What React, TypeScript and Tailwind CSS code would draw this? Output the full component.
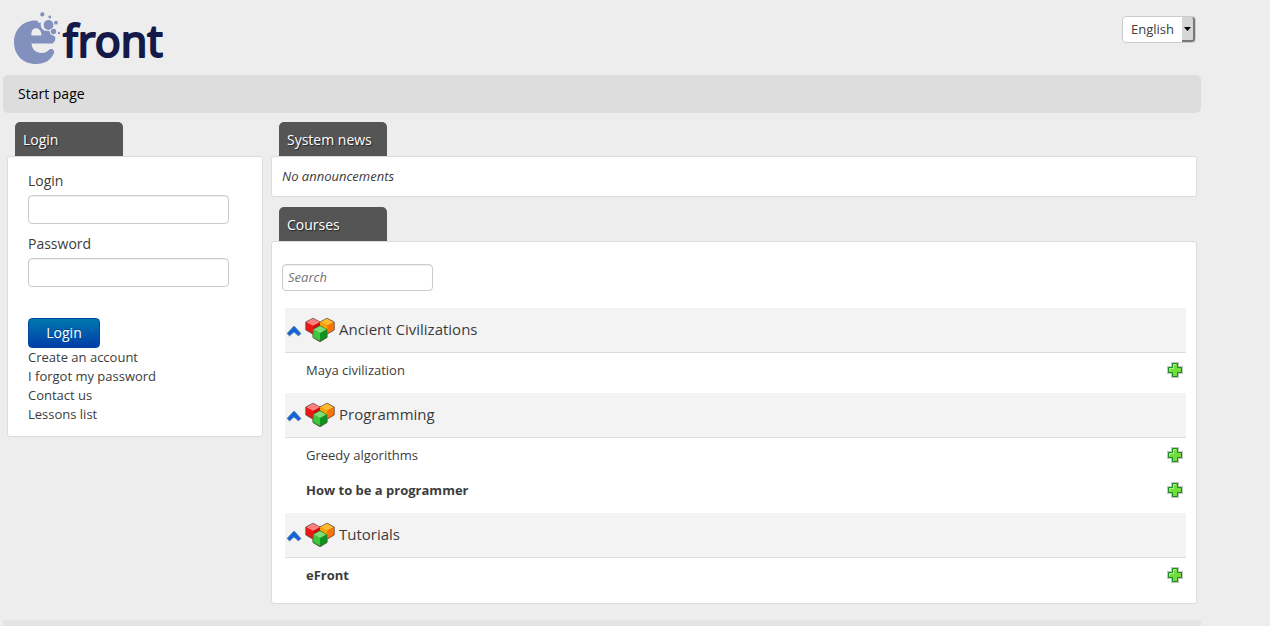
import { useState, type ReactNode } from "react";

type Course = { name: string; bold?: boolean };
type Category = { title: string; courses: Course[] };

const categories: Category[] = [
  { title: "Ancient Civilizations", courses: [{ name: "Maya civilization" }] },
  {
    title: "Programming",
    courses: [{ name: "Greedy algorithms" }, { name: "How to be a programmer", bold: true }],
  },
  { title: "Tutorials", courses: [{ name: "eFront", bold: true }] },
];

const links = ["Create an account", "I forgot my password", "Contact us", "Lessons list"];

function Logo() {
  return (
    <svg width="160" height="65" viewBox="0 0 160 65" role="img" aria-label="efront">
      <path
        fill="#8290bd"
        fillRule="evenodd"
        d="M23 10.500C10 9.500 0 19 0 32C0 45 9 54 22 54C31 54 37 50 40 43C41 40 38 38 35.500 39.500C33 42 31 43 27.500 43C22 43 18 39.500 17.500 33.500H38.500C41 32 42 28.500 41 26.500L37 24.500L35.500 21L30 20.500C27 18.500 26 15 27 12.500L25 13ZM17.500 25.500C16 16 27.500 15.500 27.500 25.500Z"
      />
      <circle cx="34.500" cy="15" r="4.900" fill="#8290bd" />
      <circle cx="39.500" cy="21.500" r="3.600" fill="#ededed" />
      <circle cx="39.500" cy="21.500" r="2.700" fill="#8290bd" />
      <circle cx="28.300" cy="4.400" r="2.100" fill="#8290bd" />
      <circle cx="35.800" cy="7" r="1.400" fill="#8290bd" />
      <circle cx="42" cy="12.700" r="1.900" fill="#8290bd" />
      <circle cx="45" cy="23" r="1.200" fill="#8290bd" />
      <text
        x="49"
        y="47"
        fill="#131a4a"
        stroke="#131a4a"
        strokeWidth="2"
        strokeLinejoin="round"
        className="font-['Noto_Sans',sans-serif] text-[43px]"
      >
        front
      </text>
    </svg>
  );
}

function Chevron() {
  return (
    <svg width="16" height="16" viewBox="0 0 16 16" aria-hidden="true">
      <path d="M1.200 11.500L8 4.200L14.800 11.500L12.500 13.800L8 9.800L3.500 13.800Z" fill="#1668d0" stroke="#3d6ba8" strokeLinejoin="round" />
      <path d="M3.500 11.500L8 7L12.500 11.500" fill="none" stroke="#0f63dd" strokeWidth="2" />
    </svg>
  );
}

function Cubes() {
  return (
    <svg width="30" height="26" viewBox="0 0 30 26" aria-hidden="true">
      <path
        d="M8 1.200L15 5L22 1.200L29.200 5V13L22 17.200V20.500L15 24.800L8 20.500V17.200L0.800 13V5Z"
        fill="#8a3418"
        stroke="#75625b"
        strokeLinejoin="round"
      />
      <path d="M8 1.500L15 5.200L8 9L1.200 5.200Z" fill="#ff7d7d" />
      <path d="M1.200 5.200L8 9V16.600L1.200 12.800Z" fill="#f01616" />
      <path d="M8 9L15 5.200V12.600L8 16.600Z" fill="#d40c0e" />
      <path d="M22 1.500L28.800 5.200L22 9L15 5.200Z" fill="#ffb92e" />
      <path d="M15 5.200L22 9V16.600L15 12.600Z" fill="#ffa400" />
      <path d="M22 9L28.800 5.200V12.800L22 16.600Z" fill="#ff7400" />
      <path d="M15 8.300L22.200 12.200V20.500L15 24.500L7.800 20.500V12.200Z" fill="#35702a" />
      <path d="M15 9L21.600 12.500L15 16.200L8.400 12.500Z" fill="#7ddc74" />
      <path d="M8.400 12.500L15 16.200V23.800L8.400 20.200Z" fill="#3cc83c" />
      <path d="M15 16.200L21.600 12.500V20.200L15 23.800Z" fill="#0b9420" />
    </svg>
  );
}

function Plus() {
  return (
    <svg width="16" height="16" viewBox="0 0 16 16" aria-hidden="true">
      <path d="M4 0H12V4H16V12H12V16H4V12H0V4H4Z" fill="#c4c4c4" />
      <path d="M5.500 1.500H10.500V5.500H14.500V10.500H10.500V14.500H5.500V10.500H1.500V5.500H5.500Z" fill="#72dc3c" stroke="#178a20" />
      <path d="M2.500 9V6.500H6.500V2.500H9" fill="none" stroke="#b1f58b" />
    </svg>
  );
}

function Panel({ title, children }: { title: string; children: ReactNode }) {
  return (
    <section>
      <h2 className="ml-2 flex h-[34px] w-[108px] items-center rounded-t-[5px] bg-[#555] px-2 pt-0.5 text-sm text-white [text-shadow:1px_1px_1px_#222]">
        {title}
      </h2>
      <div className="rounded-[3px] border border-[#dcdcdc] bg-white">{children}</div>
    </section>
  );
}

function CategoryBlock({ title, courses }: Category) {
  const [open, setOpen] = useState(true);
  return (
    <div className="pb-[5px]">
      <h3>
        <button
          type="button"
          aria-expanded={open}
          onClick={() => setOpen(!open)}
          className="flex h-[45px] w-full items-center border-b border-[#dcdcdc] bg-[#f3f3f3] pl-px text-[15px]"
        >
          <Chevron />
          <span className="ml-[3px] mr-1">
            <Cubes />
          </span>
          <span className="pb-0.5">{title}</span>
        </button>
      </h3>
      {open && (
        <ul>
          {courses.map((course) => (
            <li key={course.name} className="flex h-[35px] items-center justify-between pl-[21px] pr-[3px] text-[13px]">
              <a href="#" className={course.bold ? "font-bold" : ""}>
                {course.name}
              </a>
              <button type="button" aria-label={`Add ${course.name}`} className="pb-px">
                <Plus />
              </button>
            </li>
          ))}
        </ul>
      )}
    </div>
  );
}

export default function App() {
  const field =
    "block rounded-[4px] border border-[#ccc] bg-white px-[5px] shadow-[inset_0_1px_1px_rgba(0,0,0,0.075)] outline-none";
  return (
    <div className="min-h-screen bg-[#ededed] pl-[3px] pr-[69px] font-['Open_Sans','Noto_Sans',sans-serif] text-[#3c3c3c]">
      <header className="flex h-[75px] items-start justify-between pl-[11px] pr-[5px]">
        <a href="#" className="pt-[10px]">
          <Logo />
        </a>
        <div className="relative mt-4">
          <select
            aria-label="Language"
            className="block h-[27px] w-[74px] appearance-none rounded-[4px] border border-[#ccc] bg-white pl-2 text-[13px] outline-none"
          >
            <option>English</option>
          </select>
          <span className="pointer-events-none absolute inset-y-px right-px flex w-[13px] items-center justify-center rounded-r-[3px] border-b-2 border-r-2 border-[#777] bg-[#d6d6d6]">
            <svg width="7" height="4" viewBox="0 0 7 4" aria-hidden="true">
              <path d="M0 0H7L3.500 4Z" />
            </svg>
          </span>
        </div>
      </header>

      <nav className="flex h-[38px] items-center rounded-[5px] bg-[#ddd] px-[15px] text-sm text-black">
        <a href="#">Start page</a>
      </nav>

      <main className="flex items-start gap-2 px-1 pb-4 pt-[9px]">
        <aside className="w-[256px] shrink-0">
          <Panel title="Login">
            <form className="px-5 pb-3 pt-[14px]" onSubmit={(e) => e.preventDefault()}>
              <label htmlFor="login" className="block text-sm">
                Login
              </label>
              <input id="login" type="text" className={`${field} mt-1 h-[29px] w-[201px] text-sm`} />
              <label htmlFor="password" className="mt-[10px] block text-sm">
                Password
              </label>
              <input id="password" type="password" className={`${field} mt-1 h-[29px] w-[201px] text-sm`} />
              <button
                type="submit"
                className="mt-[31px] block h-[30px] w-[72px] rounded-[4px] border border-[#03499b] bg-linear-to-b from-[#0077ad] to-[#003ca8] text-sm text-white [text-shadow:0_-1px_0_rgba(0,0,0,0.25)]"
              >
                Login
              </button>
              <ul className="text-[13px] leading-[19px]">
                {links.map((link) => (
                  <li key={link}>
                    <a href="#">{link}</a>
                  </li>
                ))}
              </ul>
            </form>
          </Panel>
        </aside>

        <div className="flex min-w-0 flex-1 flex-col gap-[10px]">
          <Panel title="System news">
            <p className="px-[10px] py-[9px] text-[13px] italic leading-[21px]">No announcements</p>
          </Panel>
          <Panel title="Courses">
            <div className="px-[10px] pb-[5px] pt-[22px]">
              <input
                type="search"
                aria-label="Search"
                placeholder="Search"
                className={`${field} h-[27px] w-[151px] pb-0.5 text-[13px] placeholder:italic placeholder:text-[#757575]`}
              />
              <div className="ml-[3px] mt-[17px]">
                {categories.map((category) => (
                  <CategoryBlock key={category.title} {...category} />
                ))}
              </div>
            </div>
          </Panel>
        </div>
      </main>
      <footer className="h-[6px] bg-[#e4e4e4]" />
    </div>
  );
}
